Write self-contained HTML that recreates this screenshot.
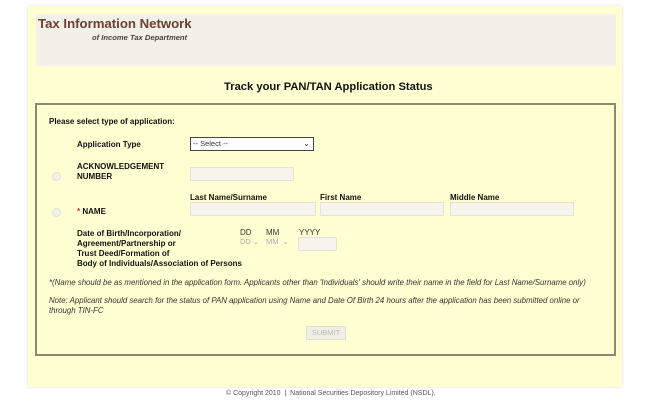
<!DOCTYPE html>
<html><head><style>
body{margin:0;width:650px;height:413px;background:#fff;font-family:"Liberation Sans",Arial,sans-serif;position:relative;overflow:hidden}
.a{position:absolute;white-space:nowrap}
.outer{position:absolute;left:28px;top:6px;width:594px;height:381px;background:#ffffd2;box-shadow:0 0 3px #ddd}
.hdr{position:absolute;left:36px;top:14px;width:580px;height:52px;background:#f1f1e9}
.box{position:absolute;left:35px;top:103px;width:577px;height:249px;border:2px solid #8a8a72;}
.b{font-weight:bold;font-size:8px;color:#111}
.in{position:absolute;height:12px;border:1px solid #e2e2d6;background:#f5f5ee;border-radius:1px}
.rad{position:absolute;width:7px;height:7px;border-radius:50%;border:1px solid #e0e0d8;background:#f2f2ea}
.i{font-style:italic;font-size:7.85px;color:#333}
</style></head><body>
<div class="outer"></div>
<div class="hdr"></div>
<div class="a" style="left:38px;top:16px;font-size:13.2px;font-weight:bold;color:#6e3f2d">Tax Information Network</div>
<div class="a" style="left:92px;top:33px;font-size:7.6px;font-style:italic;font-weight:bold;color:#444">of Income Tax Department</div>
<div class="a" style="left:224px;top:81px;font-size:11.2px;font-weight:bold;color:#111">Track your PAN/TAN Application Status</div>
<div class="box"></div>
<div class="a b" style="left:49px;top:117px">Please select type of application:</div>
<div class="a b" style="left:77px;top:140px">Application Type</div>
<div class="a" style="left:190px;top:137px;width:120px;height:12px;border:1px solid #444;background:#fff;font-size:7.5px;color:#333;line-height:12px;padding-left:2px">-- Select --<span style="position:absolute;right:3px;top:0;font-size:8px">&#8964;</span></div>
<div class="rad" style="left:52px;top:172px"></div>
<div class="a b" style="left:77px;top:162px;line-height:10px">ACKNOWLEDGEMENT<br>NUMBER</div>
<div class="in" style="left:190px;top:167px;width:102px"></div>
<div class="a b" style="left:190px;top:193px">Last Name/Surname</div>
<div class="a b" style="left:320px;top:193px">First Name</div>
<div class="a b" style="left:450px;top:193px">Middle Name</div>
<div class="rad" style="left:52px;top:208px"></div>
<div class="a b" style="left:77px;top:207px"><span style="color:#c33">*</span> NAME</div>
<div class="in" style="left:190px;top:202px;width:124px"></div>
<div class="in" style="left:320px;top:202px;width:122px"></div>
<div class="in" style="left:450px;top:202px;width:122px"></div>
<div class="a b" style="left:77px;top:229px;line-height:10px">Date of Birth/Incorporation/<br>Agreement/Partnership or<br>Trust Deed/Formation of<br>Body of Individuals/Association of Persons</div>
<div class="a" style="left:240px;top:228px;font-size:8px;color:#333">DD</div>
<div class="a" style="left:266px;top:228px;font-size:8px;color:#333">MM</div>
<div class="a" style="left:299px;top:228px;font-size:8px;color:#333">YYYY</div>
<div class="a" style="left:240px;top:237px;font-size:7.5px;color:#aaa">DD &#8964;</div>
<div class="a" style="left:266px;top:237px;font-size:7.5px;color:#aaa">MM &nbsp;&#8964;</div>
<div class="in" style="left:298px;top:237px;width:37px"></div>
<div class="a i" style="left:49px;top:278px">*(Name should be as mentioned in the application form. Applicants other than 'Individuals' should write their name in the field for Last Name/Surname only)</div>
<div class="a i" style="left:49px;top:296px;line-height:10px">Note: Applicant should search for the status of PAN application using Name and Date Of Birth 24 hours after the application has been submitted online or<br>through TIN-FC</div>
<div class="a" style="left:306px;top:326px;width:38px;height:12px;border:1px solid #ddd;background:#efefe4;font-size:7.5px;color:#bbb;text-align:center;line-height:12px">SUBMIT</div>
<div class="a" style="left:226px;top:390px;font-size:7px;color:#555">© Copyright 2010 &nbsp;| &nbsp;National Securities Depository Limited (NSDL).</div>
</body></html>
